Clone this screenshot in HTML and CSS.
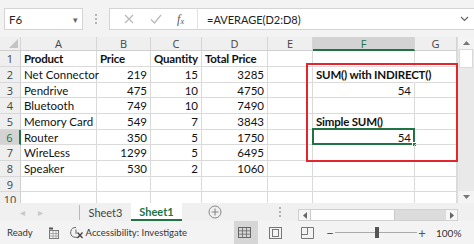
FILE: index.html
```html
<!DOCTYPE html>
<html>
<head>
<meta charset="utf-8">
<link rel="stylesheet" href="styles.css">
</head>
<body>
<div class="app">
  <div class="fbar">
    <div class="namebox"><span>F6</span><span class="dd">&#9662;</span></div>
    <div class="vdots"><i></i><i></i><i></i></div>
    <div class="fbox">
      <div class="ficons">
        <svg width="12" height="12" viewBox="0 0 12 12"><path d="M2 2L10 10M10 2L2 10" stroke="#b8b8b8" stroke-width="1.2" fill="none"/></svg>
        <svg width="14" height="12" viewBox="0 0 14 12"><path d="M2 6.5L5.5 10L12 2" stroke="#b8b8b8" stroke-width="1.2" fill="none"/></svg>
        <span class="fx">f<sub>x</sub></span>
      </div>
      <div class="ftext">=AVERAGE(D2:D8)</div>
      <svg class="chev" width="9" height="6" viewBox="0 0 9 6"><path d="M1 1L4.5 4.5L8 1" stroke="#666" stroke-width="1.2" fill="none"/></svg>
    </div>
  </div>

  <div class="sheetwrap">
    <div class="grid">
      <div class="hd corner"><span class="tri"></span></div>
      <div class="hd">A</div><div class="hd">B</div><div class="hd">C</div><div class="hd">D</div><div class="hd">E</div><div class="hd sel">F</div><div class="hd">G</div>

      <div class="rh">1</div><div class="c b">Product</div><div class="c b">Price</div><div class="c b">Quantity</div><div class="c b">Total Price</div><div class="c"></div><div class="c"></div><div class="c"></div>
      <div class="rh">2</div><div class="c">Net Connector</div><div class="c n">219</div><div class="c n">15</div><div class="c n">3285</div><div class="c"></div><div class="c b ov">SUM() with INDIRECT()</div><div class="c"></div>
      <div class="rh">3</div><div class="c">Pendrive</div><div class="c n">475</div><div class="c n">10</div><div class="c n">4750</div><div class="c"></div><div class="c n">54</div><div class="c"></div>
      <div class="rh">4</div><div class="c">Bluetooth</div><div class="c n">749</div><div class="c n">10</div><div class="c n">7490</div><div class="c"></div><div class="c"></div><div class="c"></div>
      <div class="rh">5</div><div class="c">Memory Card</div><div class="c n">549</div><div class="c n">7</div><div class="c n">3843</div><div class="c"></div><div class="c b">Simple SUM()</div><div class="c"></div>
      <div class="rh rsel">6</div><div class="c">Router</div><div class="c n">350</div><div class="c n">5</div><div class="c n">1750</div><div class="c"></div><div class="c n active">54<span class="selbox"><span class="handle"></span></span></div><div class="c"></div>
      <div class="rh">7</div><div class="c">WireLess</div><div class="c n">1299</div><div class="c n">5</div><div class="c n">6495</div><div class="c"></div><div class="c"></div><div class="c"></div>
      <div class="rh">8</div><div class="c">Speaker</div><div class="c n">530</div><div class="c n">2</div><div class="c n">1060</div><div class="c"></div><div class="c"></div><div class="c"></div>
      <div class="rh">9</div><div class="c"></div><div class="c"></div><div class="c"></div><div class="c"></div><div class="c"></div><div class="c"></div><div class="c"></div>
      <div class="rh">10</div><div class="c"></div><div class="c"></div><div class="c"></div><div class="c"></div><div class="c"></div><div class="c"></div><div class="c"></div>
      <div class="redbox"></div>
    </div>
    <div class="vscroll">
      <div class="vbtn"><svg width="7" height="4" viewBox="0 0 7 4"><path d="M0 4L3.5 0L7 4Z" fill="#777"/></svg></div>
      <div class="vthumb"></div>
      <div class="vtrack"></div>
      <div class="vbtn"><svg width="7" height="4" viewBox="0 0 7 4"><path d="M0 0L3.5 4L7 0Z" fill="#777"/></svg></div>
    </div>
  </div>

  <div class="tabbar">
    <div class="navs"><span>&#9666;</span><span>&#9656;</span></div>
    <div class="tsep"></div>
    <div class="tab">Sheet3</div>
    <div class="tab active">Sheet1</div>
    <div class="plus"><svg width="14" height="14" viewBox="0 0 14 14"><circle cx="7" cy="7" r="6" stroke="#888" stroke-width="1" fill="none"/><path d="M7 3.5V10.5M3.5 7H10.5" stroke="#888" stroke-width="1.1"/></svg></div>
    <div class="spacer"></div>
    <div class="vdots small"><i></i><i></i><i></i></div>
    <div class="hscroll">
      <div class="hbtn"><svg width="4" height="7" viewBox="0 0 4 7"><path d="M4 0L0 3.5L4 7Z" fill="#666"/></svg></div>
      <div class="hthumb"></div>
      <div class="htrack"></div>
      <div class="hbtn"><svg width="4" height="7" viewBox="0 0 4 7"><path d="M0 0L4 3.5L0 7Z" fill="#666"/></svg></div>
    </div>
  </div>

  <div class="status">
    <span class="ready">Ready</span>
    <svg class="cellmode" width="12" height="12" viewBox="0 0 12 12"><rect x="1.5" y="3.5" width="9" height="8" fill="none" stroke="#777"/><path d="M1.5 6.5H10.5M1.5 9H10.5M5 3.5V11.5M8 3.5V11.5" stroke="#999" stroke-width="0.8"/><rect x="1" y="0.5" width="4" height="2" fill="#555"/></svg>
    <svg class="acc" width="14" height="13" viewBox="0 0 14 13"><path d="M6 1.5A5 5 0 1 0 10 9" stroke="#666" stroke-width="1" fill="none"/><path d="M6 3.5V8" stroke="#666" stroke-width="1"/><path d="M7.5 6.5L12.5 12M12.5 6.5L7.5 12" stroke="#444" stroke-width="1.3"/></svg>
    <span class="acctext">Accessibility: Investigate</span>
    <div class="spacer"></div>
    <div class="view on"><svg width="13" height="11" viewBox="0 0 13 11"><rect x="0.5" y="0.5" width="12" height="10" fill="none" stroke="#666"/><path d="M0.5 3.8H12.5M0.5 7.2H12.5M4.5 0.5V10.5M8.5 0.5V10.5" stroke="#666" stroke-width="0.8"/></svg></div>
    <div class="view v2"><svg width="13" height="12" viewBox="0 0 13 12"><rect x="0.5" y="0.5" width="12" height="11" fill="none" stroke="#777"/><rect x="3.5" y="2.5" width="6" height="7" fill="none" stroke="#777"/></svg></div>
    <div class="view v3"><svg width="13" height="12" viewBox="0 0 13 12"><path d="M0.5 0.5H12.5V11.5H0.5Z M0.5 7.5H6.5V0.5" fill="none" stroke="#777"/></svg></div>
    <div class="zoom">
      <span class="zm">&minus;</span>
      <div class="slider"><span class="knob"></span></div>
      <span class="zm">+</span>
      <span class="pct">100%</span>
    </div>
  </div>
</div>
</body>
</html>
```
FILE: styles.css
```css
* { box-sizing: border-box; }
html, body { margin: 0; padding: 0; }
body { width: 474px; height: 244px; overflow: hidden; background: #f3f3f3; font-family: "Lato", "Open Sans", sans-serif; }
.app { width: 474px; height: 244px; display: flex; flex-direction: column; position: relative; }

.fbar { height: 37px; display: flex; align-items: flex-start; padding: 8px 0 0 4px; }
.namebox { width: 79px; height: 22px; background: #fff; border: 1px solid #d4d4d4; display: flex; align-items: center; justify-content: space-between; padding: 0 4px 0 4px; font-size: 11.5px; color: #222; }
.namebox .dd { font-size: 9px; color: #666; }
.vdots { width: 26px; height: 22px; display: flex; flex-direction: column; align-items: center; justify-content: center; gap: 2px; }
.vdots i { width: 2px; height: 2px; background: #b4b4b4; display: block; }
.fbox { flex: 1; height: 22px; background: #fff; border: 1px solid #d4d4d4; border-right: none; display: flex; align-items: center; }
.ficons { width: 88px; height: 100%; display: flex; align-items: center; justify-content: space-around; padding: 0 6px 0 6px; border-right: 1px solid #e2e2e2; }
.fx { font-family: "Liberation Serif", serif; font-style: italic; font-size: 12px; color: #555; }
.fx sub { font-size: 8px; vertical-align: -1px; }
.ftext { flex: 1; padding-left: 9px; font-size: 11px; color: #222; }
.chev { margin-right: 5px; }

.sheetwrap { height: 166px; display: flex; overflow: hidden; background: #fff; }
.grid { position: relative; display: grid; grid-template-columns: 21px 76px 54px 51px 66px 45px 102px 42px; grid-template-rows: 14px 16px 16px 15px 16px 16px 15px 16px 16px 15px 16px; width: 473px; font-family: "Lato", "Open Sans", sans-serif; font-size: 11.5px; color: #111; }
.hd { background: #efefef; border-right: 1px solid #d5d5d5; border-bottom: 1px solid #cfcfcf; display: flex; align-items: center; justify-content: center; font-family: "Open Sans", sans-serif; font-size: 11px; color: #444; }
.hd.corner { position: relative; }
.tri { position: absolute; right: 2px; bottom: 2px; width: 0; height: 0; border-left: 9px solid transparent; border-bottom: 9px solid #c4c4c4; }
.hd.sel { background: #d3d3d3; border-bottom: 2px solid #217346; color: #217346; }
.rh { background: #efefef; border-right: 1px solid #cfcfcf; border-bottom: 1px solid #d8d8d8; display: flex; align-items: center; justify-content: center; font-family: "Open Sans", sans-serif; font-size: 11px; color: #444; }
.rh.rsel { background: #d3d3d3; border-right: 2px solid #217346; color: #217346; }
.c { border-right: 1px solid #dadada; border-bottom: 1px solid #dadada; padding: 0 3px 0 3px; display: flex; align-items: center; white-space: nowrap; overflow: visible; position: relative; }
.c.b { font-weight: 700; letter-spacing: -0.2px; }
.c.n { justify-content: flex-end; }
.c.ov { border-right-color: transparent; }
.selbox { position: absolute; left: -1px; top: -2px; right: -1px; bottom: -1px; border: 2px solid #217346; }
.handle { position: absolute; right: -4px; bottom: -4px; width: 5px; height: 5px; background: #217346; border: 1px solid #fff; }
.redbox { position: absolute; left: 306px; top: 26px; width: 152px; height: 99px; border: 2px solid #e3262c; pointer-events: none; }

.vscroll { width: 17px; flex: none; display: flex; flex-direction: column; background: #e9e9e9; border-left: 1px solid #dcdcdc; }
.vbtn { height: 12px; display: flex; align-items: center; justify-content: center; background: #f4f4f4; }
.vthumb { height: 19px; background: #fff; border: 1px solid #dadada; margin: 0 1px; }
.vtrack { flex: 1; }

.tabbar { height: 18px; display: flex; align-items: stretch; background: #f0f0f0; font-size: 11px; }
.navs { width: 79px; display: flex; align-items: center; gap: 13px; padding-left: 20px; color: #c8c8c8; font-size: 10px; }
.tsep { width: 1px; background: #b8b8b8; margin: 2px 0 1px; }
.tab { width: 51px; display: flex; align-items: center; justify-content: center; color: #444; }
.tab.active { background: #fff; color: #217346; font-weight: 700; border-bottom: 2px solid #217346; }
.plus { width: 66px; display: flex; align-items: center; justify-content: center; }
.spacer { flex: 1; }
.vdots.small { width: 10px; height: 18px; gap: 2px; margin-right: 13px; }
.hscroll { width: 160px; margin: 6px 16px 0 0; height: 12px; display: flex; background: #dcdcdc; border: 1px solid #d0d0d0; }
.hbtn { width: 11px; display: flex; align-items: center; justify-content: center; background: #f6f6f6; }
.hthumb { width: 85px; background: #fff; border-left: 1px solid #c8c8c8; border-right: 1px solid #c8c8c8; }
.htrack { flex: 1; }

.status { height: 23px; display: flex; align-items: center; background: #f3f3f3; font-size: 9.5px; color: #333; padding: 0 10px 0 7px; }
.ready { margin-right: 15px; }
.cellmode { margin-right: 10px; }
.acc { margin-right: 2px; }
.view { width: 24px; height: 23px; display: flex; align-items: center; justify-content: center; flex: none; }
.view.on { background: #d6d6d6; margin-right: 5px; padding-right: 4px; }
.view.v2 { margin-right: 8px; }
.view.v3 { margin-right: 6px; }
.zoom { display: flex; align-items: center; width: 139px; flex: none; }
.zm { color: #555; font-size: 13px; width: 10px; text-align: center; flex: none; }
.slider { width: 82px; height: 1px; background: #aaa; position: relative; flex: none; }
.knob { position: absolute; left: 40px; top: -5px; width: 4px; height: 11px; background: #555; }
.pct { margin-left: 9px; font-size: 10px; }
```
